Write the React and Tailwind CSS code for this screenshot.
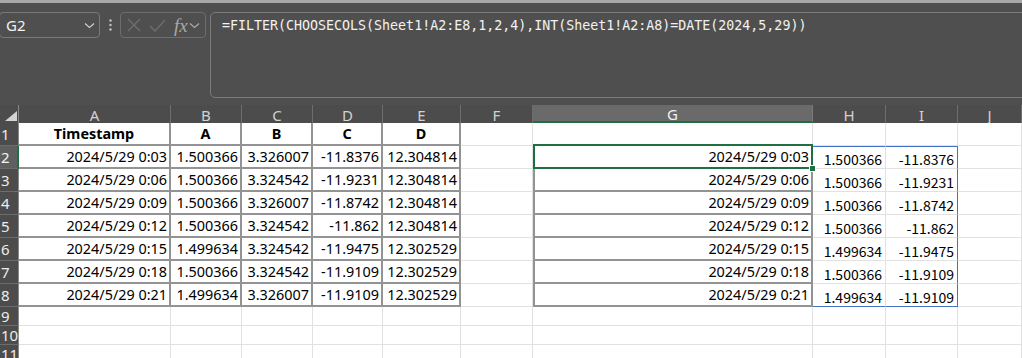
import React from 'react';

const cols = ['A', 'B', 'C', 'D', 'E', 'F', 'G', 'H', 'I', 'J'];

const data = [
  ['2024/5/29 0:03', '1.500366', '3.326007', '-11.8376', '12.304814'],
  ['2024/5/29 0:06', '1.500366', '3.324542', '-11.9231', '12.304814'],
  ['2024/5/29 0:09', '1.500366', '3.326007', '-11.8742', '12.304814'],
  ['2024/5/29 0:12', '1.500366', '3.324542', '-11.862', '12.304814'],
  ['2024/5/29 0:15', '1.499634', '3.324542', '-11.9475', '12.302529'],
  ['2024/5/29 0:18', '1.500366', '3.324542', '-11.9109', '12.302529'],
  ['2024/5/29 0:21', '1.499634', '3.326007', '-11.9109', '12.302529'],
];

const plain = 'bg-white border-r border-b border-[#e1e1e1]';
const boxed = 'bg-white flex items-center justify-end pr-[2px] border-r-2 border-b-2 border-[#939393] whitespace-nowrap';
const headCell = 'bg-white flex items-center justify-center font-bold border-r-2 border-b-2 border-[#939393] whitespace-nowrap';
const gCell = 'bg-white flex items-center justify-end pr-[2px] border-l-2 border-r-2 border-b-2 border-[#939393] whitespace-nowrap';
const spill = "bg-white flex items-center justify-end pr-[3px] pt-[4px] font-['Noto_Sans_CJK_SC',sans-serif] text-[14px] whitespace-nowrap";

function Chevron({ className }) {
  return (
    <svg width="11" height="7" viewBox="0 0 11 7" className={className}>
      <path d="M1 1.5 L5.5 5.5 L10 1.5" fill="none" stroke="currentColor" strokeWidth="1.2" />
    </svg>
  );
}

function RowHeader({ n, active }) {
  return (
    <div
      className={
        active
          ? 'bg-[#5f5f5f] text-[#f4f4f4] border-b border-[#6c6c6c] border-r-2 border-r-[#1e6f41] flex items-center pl-[1px] text-[15px] leading-none'
          : 'bg-[#4c4c4c] text-[#ededed] border-b border-[#6c6c6c] border-r border-r-[#8a8a8a] flex items-center pl-[1px] text-[15px] leading-none'
      }
    >
      {n}
    </div>
  );
}

function App() {
  return (
    <div className="w-[1022px] h-[358px] overflow-hidden bg-[#4f4f4f] font-['Noto_Sans',sans-serif] text-[14.4px]">
      <div className="h-[3px] bg-[#a8a8a8]" />

      <div className="h-[102px] flex items-start pt-[9px]">
        <div className="shrink-0 ml-[-1px] w-[101px] h-[26px] border border-[#797979] rounded-[4px] flex items-center justify-between pl-[6px] pr-[4px] text-[#f2f2f2] text-[15px]">
          <span>G2</span>
          <Chevron className="text-[#cfcfcf]" />
        </div>
        <div className="shrink-0 w-[20px] h-[26px] flex items-center justify-center">
          <svg width="3" height="12" viewBox="0 0 3 12">
            <circle cx="1.5" cy="1.5" r="1.2" fill="#c4c4c4" />
            <circle cx="1.5" cy="6" r="1.2" fill="#c4c4c4" />
            <circle cx="1.5" cy="10.5" r="1.2" fill="#c4c4c4" />
          </svg>
        </div>
        <div className="shrink-0 w-[86px] h-[26px] border border-[#6d6d6d] rounded-[4px] flex items-center pl-[6px] gap-[8px]">
          <svg width="14" height="14" viewBox="0 0 14 14">
            <path d="M1 1 L13 13 M13 1 L1 13" stroke="#6f6f6f" strokeWidth="1.3" />
          </svg>
          <svg width="17" height="13" viewBox="0 0 17 13">
            <path d="M1 7 L6 12 L16 1" fill="none" stroke="#6f6f6f" strokeWidth="1.3" />
          </svg>
          <span className="font-['Liberation_Serif',serif] italic text-[19px] text-[#a9a9a9] leading-none">fx</span>
          <Chevron className="text-[#a9a9a9] -ml-[7px]" />
        </div>
        <div className="shrink-0 ml-[4px] w-[830px] h-[86px] border border-[#7b7b7b] rounded-[5px] pl-[11px] pt-[4px] font-['DejaVu_Sans_Mono',monospace] text-[13.3px] leading-[18px] text-[#f2f2f2] whitespace-nowrap">
          =FILTER(CHOOSECOLS(Sheet1!A2:E8,1,2,4),INT(Sheet1!A2:A8)=DATE(2024,5,29))
        </div>
      </div>

      <div className="grid grid-cols-[19px_152px_71px_71px_70px_78px_72px_280px_73px_72px_64px] grid-rows-[18px_repeat(8,23px)_repeat(3,19px)] text-black">
        <div className="bg-[#4c4c4c] border-r border-[#8a8a8a] flex items-end justify-end pr-[1px] pb-[2px]">
          <svg width="12" height="10" viewBox="0 0 12 10">
            <path d="M12 0 L12 10 L0 10 Z" fill="#d4d4d4" />
          </svg>
        </div>
        {cols.map((c) => (
          <div
            key={c}
            className={
              c === 'G'
                ? 'bg-[#6a6a6a] text-[#f0f0f0] border-r border-[#7a7a7a] border-b-2 border-b-[#1e6f41] flex items-center justify-center text-[15px] leading-none pt-[2px]'
                : 'bg-[#4c4c4c] text-[#d2d2d2] border-r border-[#6e6e6e] flex items-center justify-center text-[15px] leading-none pt-[2px]'
            }
          >
            {c}
          </div>
        ))}

        {/* row 1 */}
        <RowHeader n="1" />
        <div className={headCell}>Timestamp</div>
        <div className={headCell}>A</div>
        <div className={headCell}>B</div>
        <div className={headCell}>C</div>
        <div className={headCell}>D</div>
        <div className={plain} />
        <div className={plain} />
        <div className={plain} />
        <div className={plain} />
        <div className={plain} />

        {data.map((r, i) => {
          const last = i === data.length - 1;
          return (
            <React.Fragment key={i}>
              <RowHeader n={String(i + 2)} active={i === 0} />
              {r.map((v, j) => (
                <div key={j} className={boxed}>{v}</div>
              ))}
              <div className={plain} />
              {i === 0 ? (
                <div className={gCell + ' relative'}>
                  {r[0]}
                  <div className="absolute -left-[2px] -top-[2px] -right-[2px] -bottom-[2px] border-2 border-[#1e6f41] z-10" />
                  <div className="absolute -right-[5px] -bottom-[5px] w-[7px] h-[7px] bg-[#1e6f41] border border-white z-20" />
                </div>
              ) : (
                <div className={gCell}>{r[0]}</div>
              )}
              <div
                className={
                  spill +
                  (i === 0
                    ? ' border-r border-b border-[#e1e1e1] border-t border-t-[#4472c4]'
                    : last
                    ? ' border-r border-[#e1e1e1] border-b border-b-[#4472c4]'
                    : ' border-r border-b border-[#e1e1e1]')
                }
              >
                {r[1]}
              </div>
              <div
                className={
                  spill +
                  (i === 0
                    ? ' border-b border-[#e1e1e1] border-t border-t-[#4472c4] border-r border-r-[#4472c4]'
                    : last
                    ? ' border-r border-r-[#4472c4] border-b border-b-[#4472c4]'
                    : ' border-b border-[#e1e1e1] border-r border-r-[#4472c4]')
                }
              >
                {r[3]}
              </div>
              <div className={plain} />
            </React.Fragment>
          );
        })}

        {['9', '10', '11'].map((n) => (
          <React.Fragment key={n}>
            <RowHeader n={n} />
            {cols.map((c) => (
              <div key={c} className={plain} />
            ))}
          </React.Fragment>
        ))}
      </div>
    </div>
  );
}

export default App;
